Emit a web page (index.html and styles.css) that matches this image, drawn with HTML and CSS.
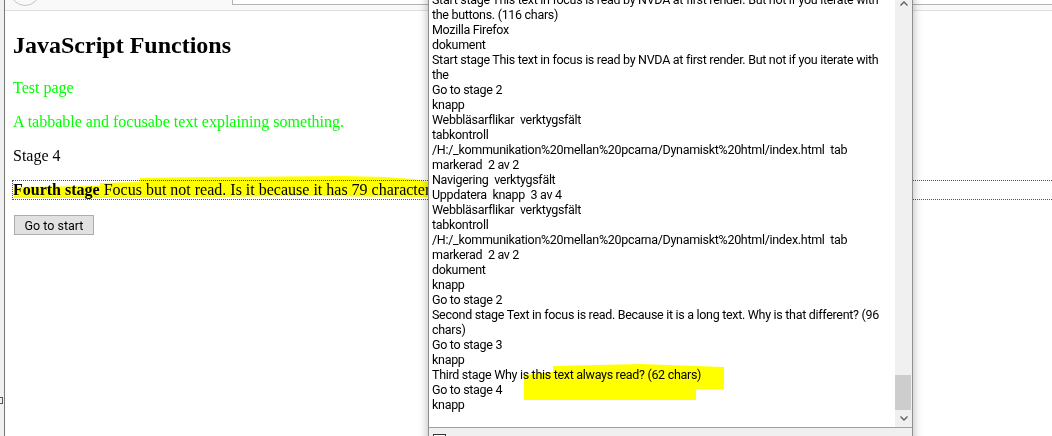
FILE: index.html
```html
<!DOCTYPE html>
<html lang="en">
<head>
    <meta charset="UTF-8">
    <meta name="viewport" content="width=device-width, initial-scale=1.0">
    <title>JavaScript Functions</title>
    <link rel="stylesheet" href="styles.css">
</head>
<body>
    <div class="desktop">
        <div class="browser">
            <div class="toolbar">
                <span class="back-btn"></span>
                <span class="urlbar"></span>
            </div>
            <div class="page">
                <h1>JavaScript Functions</h1>
                <p class="info">Test page</p>
                <p class="info" tabindex="0">A tabbable and focusabe text explaining something.</p>
                <p>Stage 4</p>
                <p class="stage-text" tabindex="0"><b>Fourth stage</b> Focus but not read. Is it because it has 79 characters? (79 chars)</p>
                <button>Go to start</button>
            </div>
        </div>
        <span class="desk-icon"></span>

        <!-- NVDA speech viewer -->
        <div class="viewer">
            <div class="log">
                <div class="lines">
                    <div>Start stage This text in focus is read by NVDA at first render. But not if you iterate with</div>
                    <div>the buttons. (116 chars)</div>
                    <div>Mozilla Firefox</div>
                    <div>dokument</div>
                    <div>Start stage This text in focus is read by NVDA at first render. But not if you iterate with</div>
                    <div>the</div>
                    <div>Go to stage 2</div>
                    <div>knapp</div>
                    <div>Webbläsarflikar  verktygsfält</div>
                    <div>tabkontroll</div>
                    <div>/H:/_kommunikation%20mellan%20pcarna/Dynamiskt%20html/index.html  tab</div>
                    <div>markerad  2 av 2</div>
                    <div>Navigering  verktygsfält</div>
                    <div>Uppdatera  knapp  3 av 4</div>
                    <div>Webbläsarflikar  verktygsfält</div>
                    <div>tabkontroll</div>
                    <div>/H:/_kommunikation%20mellan%20pcarna/Dynamiskt%20html/index.html  tab</div>
                    <div>markerad  2 av 2</div>
                    <div>dokument</div>
                    <div>knapp</div>
                    <div>Go to stage 2</div>
                    <div>Second stage Text in focus is read. Because it is a long text. Why is that different? (96</div>
                    <div>chars)</div>
                    <div>Go to stage 3</div>
                    <div>knapp</div>
                    <div>Third stage Why is this text always read? (62 chars)</div>
                    <div>Go to stage 4</div>
                    <div>knapp</div>
                </div>
                <div class="scrollbar">
                    <div class="arrow up">
                        <svg width="8" height="5" viewBox="0 0 8 5"><path d="M0.5 4.5 L4 1 L7.5 4.5" fill="none" stroke="#606060" stroke-width="1.4"/></svg>
                    </div>
                    <div class="track"><div class="thumb"></div></div>
                    <div class="arrow down">
                        <svg width="8" height="5" viewBox="0 0 8 5"><path d="M0.5 0.5 L4 4 L7.5 0.5" fill="none" stroke="#606060" stroke-width="1.4"/></svg>
                    </div>
                </div>
            </div>
            <div class="options">
                <span class="checkbox"></span>
            </div>
        </div>

        <!-- highlighter marks drawn on the screenshot -->
        <svg class="marks" width="1052" height="436" viewBox="0 0 1052 436">
            <polygon fill="#ffff00" points="14,187 100,186 100,183 140,182 140,178 205,177 343,176 385,177 413,179 428,182 428,197 300,196 100,198 14,198"/>
            <polygon fill="#ffff00" points="553,366 640,364 724,367 724,389 696,389 696,400 524,400 524,375 553,372"/>
        </svg>
    </div>
</body>
</html>
```

FILE: styles.css
```css
body {
    margin: 0;
    overflow: hidden;
    background: #f0f0f0;
    font-family: "Liberation Serif", serif;
}
.desktop {
    position: relative;
    width: 1052px;
    height: 436px;
    overflow: hidden;
}
.browser {
    margin-left: 4px;
    width: 1200px;
    height: 436px;
    border-left: 1px solid #777;
    background: #fff;
}
.toolbar {
    display: flex;
    align-items: flex-start;
    height: 10px;
    background: #f9f9f9;
    border-bottom: 1px solid #dedede;
    overflow: hidden;
}
.back-btn {
    flex: 0 0 30px;
    height: 30px;
    margin: -24px 0 0 5px;
    border: 1px solid #c4c4c4;
    border-radius: 50%;
    box-sizing: border-box;
}
.urlbar {
    flex: 0 0 1000px;
    height: 5px;
    margin-left: 192px;
    background: #fff;
    border: 1px solid #b3b3b3;
    border-top: 0;
    box-sizing: border-box;
}
.page {
    padding: 0 8px;
}
h1 {
    font-size: 24px;
    margin: 21px 0 20px;
}
p {
    font-size: 16px;
    margin: 16px 0;
}
.info {
    color: #00ff00;
}
.stage-text {
    outline: 1px dotted #555;
}
button {
    width: 80px;
    height: 20px;
    margin-left: 1px;
    padding: 0;
    font-family: Roboto, sans-serif;
    font-size: 12.5px;
    color: #000;
    background: #e1e1e1;
    border: 1px solid #adadad;
}
.desk-icon {
    position: absolute;
    left: -3px;
    top: 397px;
    width: 4px;
    height: 5px;
    border: 1px solid #555;
}

/* speech viewer window */
.viewer {
    position: absolute;
    left: 428px;
    top: -8px;
    width: 483px;
    height: 470px;
    background: #f0f0f0;
    border-left: 1px solid #8f8f8f;
    border-right: 1px solid #8f8f8f;
    box-shadow: 0 0 9px rgba(0, 0, 0, 0.3);
    font-family: Roboto, sans-serif;
}
.log {
    display: flex;
    height: 435px;
    background: #fff;
    border-bottom: 1px solid #a0a0a0;
}
.lines {
    flex: 1;
    padding-left: 3px;
    font-size: 12.5px;
    letter-spacing: -0.3px;
    line-height: 15px;
    color: #000;
    overflow: hidden;
}
.lines div {
    white-space: pre;
}
.scrollbar {
    flex: 0 0 17px;
    display: flex;
    flex-direction: column;
    background: #f0f0f0;
}
.arrow {
    height: 17px;
    display: flex;
    align-items: center;
    justify-content: center;
    box-sizing: border-box;
}
.arrow svg {
    display: block;
}
.arrow.up {
    align-items: flex-end;
    padding-bottom: 3px;
}
.track {
    flex: 1;
    display: flex;
    flex-direction: column;
    justify-content: flex-end;
}
.thumb {
    height: 35px;
    margin-right: 1px;
    background: #cdcdcd;
}
.options {
    padding: 6px 0 0 4px;
}
.checkbox {
    display: block;
    width: 13px;
    height: 13px;
    border: 1px solid #333;
    background: #fff;
    box-sizing: border-box;
}
.marks {
    position: absolute;
    left: 0;
    top: 0;
    mix-blend-mode: multiply;
    pointer-events: none;
}
```
